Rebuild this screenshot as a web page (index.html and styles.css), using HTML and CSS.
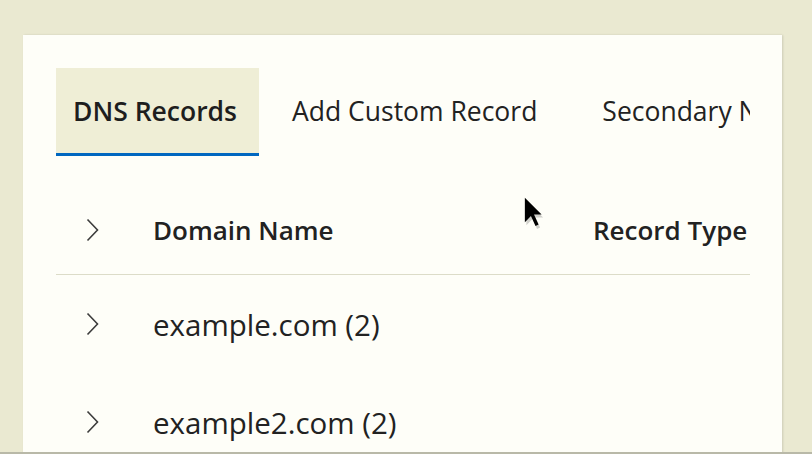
FILE: index.html
```html
<!DOCTYPE html>
<html lang="en">
<head>
<meta charset="utf-8">
<title>DNS Records</title>
<link rel="stylesheet" href="styles.css">
</head>
<body>
<div class="card">
  <div class="tabs">
    <div class="tab active">DNS Records</div>
    <div class="tab">Add Custom Record</div>
    <div class="tab">Secondary Nameservers</div>
  </div>
  <div class="table">
    <div class="row head">
      <div class="cell chev"><svg width="13" height="24" viewBox="0 0 13 24"><path d="M1.5 1.5 L11.5 12 L1.5 22.5" fill="none" stroke="#3c3c3c" stroke-width="1.6"/></svg></div>
      <div class="cell name">Domain Name</div>
      <div class="cell type">Record Type</div>
    </div>
    <div class="row">
      <div class="cell chev"><svg width="13" height="24" viewBox="0 0 13 24"><path d="M1.5 1.5 L11.5 12 L1.5 22.5" fill="none" stroke="#3c3c3c" stroke-width="1.6"/></svg></div>
      <div class="cell name">example.com (2)</div>
      <div class="cell type"></div>
    </div>
    <div class="row">
      <div class="cell chev"><svg width="13" height="24" viewBox="0 0 13 24"><path d="M1.5 1.5 L11.5 12 L1.5 22.5" fill="none" stroke="#3c3c3c" stroke-width="1.6"/></svg></div>
      <div class="cell name">example2.com (2)</div>
      <div class="cell type"></div>
    </div>
  </div>
  <svg class="cursor" width="20" height="32" viewBox="0 0 13 21">
    <path d="M1.5 2.5 L1.5 18.5 L5.5 14.5 L8.5 21 L10.5 20 L7.5 13.5 L12.5 13.5 Z" fill="#000" opacity="0.18"/>
    <path d="M0.5 0.5 L0.5 16.5 L4.5 12.5 L7.5 19 L9.5 18 L6.5 11.5 L11.5 11.5 Z" fill="#000"/>
  </svg>
</div>
</body>
</html>
```
FILE: styles.css
```css
html, body {
  margin: 0;
  padding: 0;
}
body {
  background: #eae9d1;
  height: 454px;
  box-sizing: border-box;
  padding: 35px 30px 0 23px;
  overflow: hidden;
  font-family: "Open Sans", "Noto Sans", sans-serif;
  color: #222222;
  border-bottom: 2px solid #b9b9a8;
}
.card {
  position: relative;
  background: #fefef8;
  height: 460px;
  padding: 33px 32px 0 33px;
  box-shadow: 1px 0 2px rgba(0, 0, 0, 0.12);
}
.tabs {
  display: flex;
  overflow: hidden;
  white-space: nowrap;
  height: 88px;
}
.tab {
  flex: none;
  display: flex;
  align-items: center;
  height: 88px;
  box-sizing: border-box;
  padding: 0 32px 3px 33px;
  font-size: 26.5px;
  font-weight: 400;
  color: #222222;
}
.tab.active {
  background: #efeed6;
  border-bottom: 3px solid #0067c0;
  padding: 0 22px 0 17px;
  font-weight: 600;
  color: #1e1e1e;
}
.table {
  margin-top: 30px;
  overflow: hidden;
}
.row {
  display: grid;
  grid-template-columns: 97px 440px 1fr;
  align-items: center;
  height: 98px;
  white-space: nowrap;
}
.row.head {
  height: 88px;
  border-bottom: 1px solid #dcdcc8;
}
.cell {
  font-size: 29.5px;
  color: #222222;
}
.row.head .cell {
  font-size: 26px;
  font-weight: 600;
}
.chev {
  display: flex;
  align-items: center;
  padding-left: 30px;
}
.chev svg {
  display: block;
}
.cursor {
  position: absolute;
  left: 501px;
  top: 162px;
}
```
